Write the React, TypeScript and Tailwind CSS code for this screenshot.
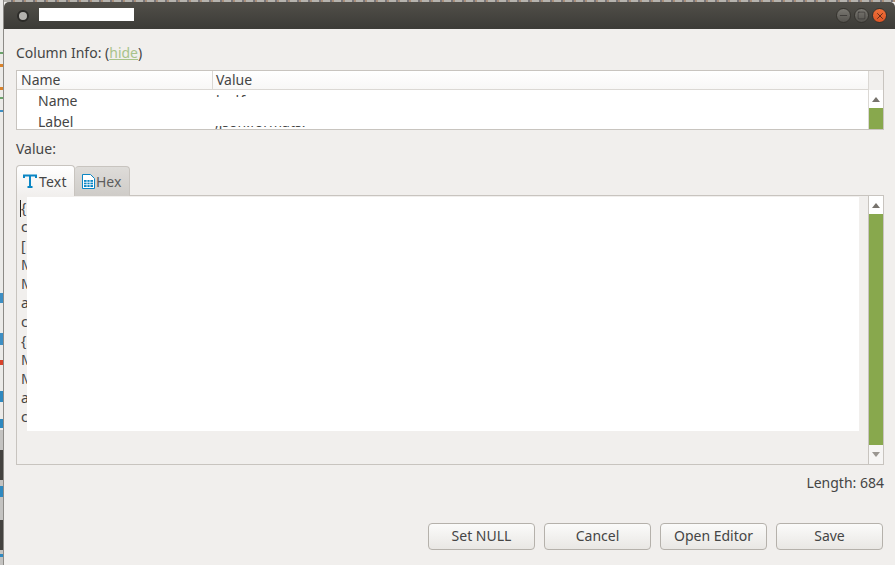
import { Minus, Square, X } from 'lucide-react';

const editorLines = ['{', 'c', '[', 'M', 'M', 'a', 'c', '{', 'M', 'M', 'a', 'c'];

function ScrollArrow({ up }: { up: boolean }) {
  return (
    <div className={`w-0 h-0 border-x-[4px] border-x-transparent ${up ? 'border-b-[5px] border-b-[#77736d]' : 'border-t-[5px] border-t-[#9a9691]'}`} />
  );
}

function PushButton({ label }: { label: string }) {
  return (
    <button className="w-[107px] h-[27px] pb-[2px] rounded-[4px] border border-[#b5b1ab] bg-gradient-to-b from-[#fbfbfa] to-[#e9e7e4] text-[14px] text-[#454545]">
      {label}
    </button>
  );
}

function TitleButton({ color, children }: { color: string; children: React.ReactNode }) {
  return (
    <div className={`w-[15px] h-[15px] rounded-full flex items-center justify-center border border-[#35332e] ${color}`}>
      {children}
    </div>
  );
}

// bits of the desktop that show left of the window
function DesktopStrip() {
  return (
    <div className="w-[4px] shrink-0 flex flex-col border-r border-[#8d8b87] bg-[linear-gradient(#ecebe9_0,#ecebe9_430px,#c4c3c1_430px)]">
      <div className="h-[52px] shrink-0" />
      <div className="h-[2px] shrink-0 bg-[#6ba36b]" />
      <div className="h-[10px] shrink-0" />
      <div className="h-[3px] shrink-0 bg-[#d9822b]" />
      <div className="h-[20px] shrink-0" />
      <div className="h-[3px] shrink-0 bg-[#d9822b]" />
      <div className="h-[7px] shrink-0" />
      <div className="h-[2px] shrink-0 bg-[#6ba36b]" />
      <div className="h-[11px] shrink-0" />
      <div className="h-[2px] shrink-0 bg-[#3d8fc4]" />
      <div className="h-[181px] shrink-0" />
      <div className="h-[10px] shrink-0 bg-[#3d8fc4]" />
      <div className="h-[30px] shrink-0" />
      <div className="h-[12px] shrink-0 bg-[#3d8fc4]" />
      <div className="h-[15px] shrink-0" />
      <div className="h-[5px] shrink-0 bg-[#d8432b]" />
      <div className="h-[26px] shrink-0" />
      <div className="h-[11px] shrink-0 bg-[#2f89c0]" />
      <div className="h-[17px] shrink-0" />
      <div className="h-[9px] shrink-0 bg-[#2f89c0]" />
      <div className="h-[22px] shrink-0" />
      <div className="h-[30px] shrink-0 bg-[#44423f]" />
      <div className="h-[6px] shrink-0" />
      <div className="h-[11px] shrink-0 bg-[#2f89c0]" />
      <div className="h-[23px] shrink-0" />
      <div className="h-[30px] shrink-0 bg-[#44423f]" />
      <div className="h-[4px] shrink-0" />
      <div className="h-[3px] shrink-0 bg-[#2f89c0]" />
    </div>
  );
}

export default function App() {
  return (
    <div className="w-[895px] h-[565px] flex overflow-hidden font-['Noto_Sans',sans-serif] text-[14px] text-[#454545] bg-[#f1efed]">
      <DesktopStrip />

      <div className="flex-1 flex flex-col">
        <div className="h-[2px] shrink-0 bg-[repeating-linear-gradient(90deg,#b5b3ae_0,#b5b3ae_7px,#77757a_7px,#77757a_9px,#a98f7a_9px,#a98f7a_11px)]" />

        {/* title bar */}
        <div className="h-[27px] shrink-0 flex items-center pl-[13px] pr-[8px] rounded-tl-[5px] rounded-tr-[5px] bg-gradient-to-b from-[#514f49] to-[#3c3b37]">
          <div className="w-[12px] h-[12px] rounded-full bg-[#b4b2ae] border-2 border-[#2c2b28]" />
          <div className="ml-[10px] mb-[2px] w-[95px] h-[13px] bg-white" />
          <div className="ml-auto flex gap-[3px]">
            <TitleButton color="bg-gradient-to-b from-[#7a7872] to-[#55534e]"><Minus size={11} strokeWidth={1.5} className="text-[#2e2d2a]" /></TitleButton>
            <TitleButton color="bg-gradient-to-b from-[#7a7872] to-[#55534e]"><Square size={9} strokeWidth={1.5} className="text-[#2e2d2a]" /></TitleButton>
            <TitleButton color="bg-gradient-to-b from-[#f0703a] to-[#de5526]"><X size={10} strokeWidth={2} className="text-[#4a2418]" /></TitleButton>
          </div>
        </div>

        <div className="flex-1 flex flex-col pl-[12px] pr-[11px]">
          <div className="h-[41px] flex items-end pb-[7px] leading-[20px]">
            <span>Column Info: (<span className="text-[#a8c38a] underline">hide</span>)</span>
          </div>

          {/* column info table */}
          <div className="h-[60px] flex border border-[#c8c4bf]">
            <div className="flex-1 flex flex-col bg-white overflow-hidden">
              <div className="h-[19px] shrink-0 flex border-b border-[#dbd8d4] bg-gradient-to-b from-white to-[#f8f7f6] leading-[18px]">
                <div className="w-[196px] pl-[4px] border-r border-[#dbd8d4]">Name</div>
                <div className="pl-[3px]">Value</div>
              </div>
              <div className="h-[21px] shrink-0 flex leading-[22px]">
                <div className="w-[196px] pl-[21px]">Name</div>
                <div className="w-[92px] relative overflow-hidden pl-[3px]">
                  <span className="tracking-[1px] whitespace-nowrap">lc_lf</span>
                  <div className="absolute inset-x-0 top-[7px] bottom-0 bg-white" />
                </div>
              </div>
              <div className="h-[21px] shrink-0 flex leading-[22px]">
                <div className="w-[196px] pl-[21px]">Label</div>
                <div className="w-[92px] relative overflow-hidden pl-[2px]">
                  <span className="whitespace-nowrap">,json.formats.r</span>
                  <div className="absolute inset-x-0 top-0 h-[15px] bg-white" />
                </div>
              </div>
            </div>
            <div className="w-[15px] shrink-0 flex flex-col border-l border-[#dbd8d4] bg-[#f1efed]">
              <div className="h-[19px]" />
              <div className="h-[18px] bg-white flex items-center justify-center"><ScrollArrow up /></div>
              <div className="flex-1 bg-[#88a84d]" />
            </div>
          </div>

          <div className="h-[36px] flex items-end pb-[7px] leading-[20px]">Value:</div>

          {/* tabs */}
          <div className="h-[30px] flex items-end relative z-10 mb-[-1px]">
            <div className="w-[59px] h-[31px] flex items-center pl-[6px] rounded-t-[4px] border border-b-0 border-[#c8c4bf] bg-gradient-to-b from-white to-[#f1efed]">
              <svg width="14" height="14" viewBox="0 0 14 14" className="shrink-0">
                <path d="M1 4V1.5h12V4M7 1.5V13M4.5 13h5" fill="none" stroke="#0b86c4" strokeWidth="2" />
              </svg>
              <span className="ml-[2px] tracking-[0.2px]">Text</span>
            </div>
            <div className="w-[55px] h-[30px] flex items-center pl-[7px] rounded-t-[4px] border border-l-0 border-b-0 border-[#c8c4bf] bg-gradient-to-b from-[#dedcd9] to-[#cfccc8] text-[#5d5d5d]">
              <svg width="13" height="15" viewBox="0 0 13 15" className="shrink-0">
                <path d="M.5.5h8l4 4v10H.5z" fill="#fff" stroke="#0b86c4" />
                <path d="M2 6h9v7H2z" fill="#0b86c4" />
                <path d="M2 8.3h9M2 10.6h9M5 6v7M8 6v7" stroke="#fff" strokeWidth=".8" />
              </svg>
              <span className="ml-[1px]">Hex</span>
            </div>
          </div>

          {/* value editor */}
          <div className="h-[270px] flex border border-[#c8c4bf]">
            <div className="flex-1 flex items-start">
              <div className="w-[10px] h-[234px] shrink-0 overflow-hidden pl-[4px] pt-[1px] relative leading-[19px] mt-[1px]">
                <div className="absolute left-[3px] top-[3px] w-px h-[17px] bg-[#222]" />
                {editorLines.map((line, i) => (
                  <div key={i} className="h-[19px]">{line}</div>
                ))}
              </div>
              <div className="w-[832px] h-[234px] mt-[1px] bg-white" />
            </div>
            <div className="w-[15px] shrink-0 flex flex-col border-l border-[#c8c4bf]">
              <div className="h-[18px] bg-white flex items-center justify-center"><ScrollArrow up /></div>
              <div className="flex-1 bg-[#88a84d]" />
              <div className="h-[19px] bg-[#f6f5f4] flex items-center justify-center"><ScrollArrow up={false} /></div>
            </div>
          </div>

          <div className="h-[36px] flex items-center justify-end leading-[20px]">Length: 684</div>

          <div className="flex justify-end gap-[9px] mt-[22px] mr-[1px]">
            <PushButton label="Set NULL" />
            <PushButton label="Cancel" />
            <PushButton label="Open Editor" />
            <PushButton label="Save" />
          </div>
        </div>
      </div>
    </div>
  );
}
